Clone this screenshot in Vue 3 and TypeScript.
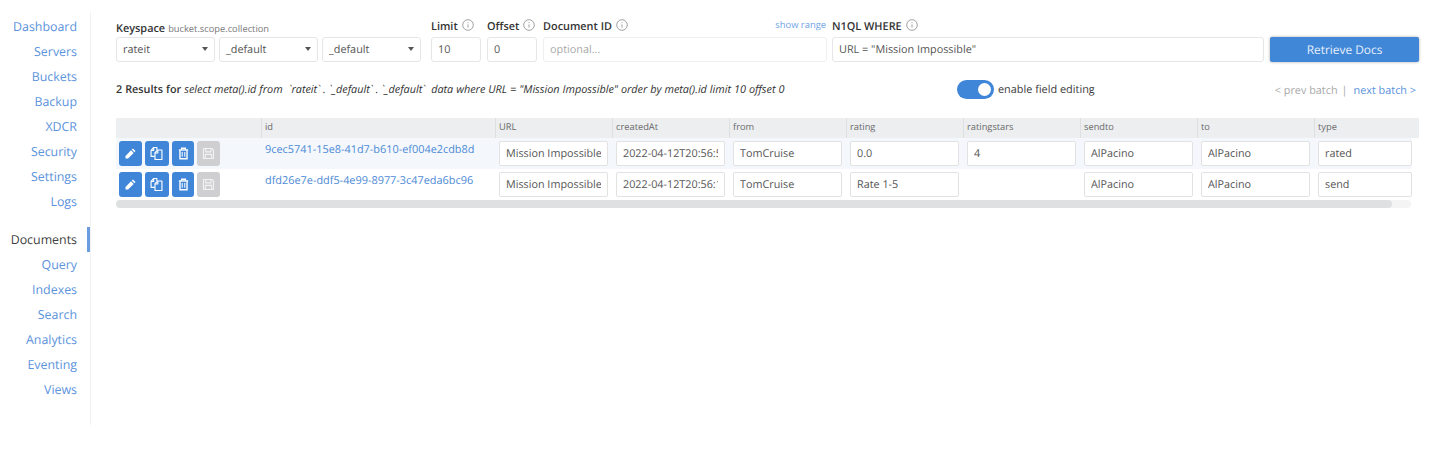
<script setup lang="ts">
const navTop: string[] = ['Dashboard', 'Servers', 'Buckets', 'Backup', 'XDCR', 'Security', 'Settings', 'Logs']
const navBottom: string[] = ['Documents', 'Query', 'Indexes', 'Search', 'Analytics', 'Eventing', 'Views']
const columns: string[] = ['', 'id', 'URL', 'createdAt', 'from', 'rating', 'ratingstars', 'sendto', 'to', 'type']
interface Row { id: string; values: string[] }
const rows: Row[] = [
  { id: '9cec5741-15e8-41d7-b610-ef004e2cdb8d', values: ['Mission Impossible', '2022-04-12T20:56:55', 'TomCruise', '0.0', '4', 'AlPacino', 'AlPacino', 'rated'] },
  { id: 'dfd26e7e-ddf5-4e99-8977-3c47eda6bc96', values: ['Mission Impossible', '2022-04-12T20:56:17', 'TomCruise', 'Rate 1-5', '', 'AlPacino', 'AlPacino', 'send'] },
]
</script>

<template>
  <div class="page">
    <nav class="side">
      <ul class="nav">
        <li v-for="n in navTop" :key="n"><a>{{ n }}</a></li>
      </ul>
      <ul class="nav second">
        <li v-for="n in navBottom" :key="n" :class="{ active: n === 'Documents' }"><a>{{ n }}</a></li>
      </ul>
    </nav>

    <main class="main">
      <section class="controls">
        <div class="field keyspace">
          <label class="lab low">Keyspace <small>bucket.scope.collection</small></label>
          <div class="selects">
            <div class="select">rateit<i class="caret"></i></div>
            <div class="select">_default<i class="caret"></i></div>
            <div class="select">_default<i class="caret"></i></div>
          </div>
        </div>
        <div class="field limit">
          <label class="lab">Limit <svg class="info" viewBox="0 0 12 12"><circle cx="6" cy="6" r="5.3"/><path d="M6 5.4v3.2M6 3.2v1"/></svg></label>
          <div class="input">10</div>
        </div>
        <div class="field offset">
          <label class="lab">Offset <svg class="info" viewBox="0 0 12 12"><circle cx="6" cy="6" r="5.3"/><path d="M6 5.4v3.2M6 3.2v1"/></svg></label>
          <div class="input">0</div>
        </div>
        <div class="field docid">
          <label class="lab spread">
            <span>Document ID <svg class="info" viewBox="0 0 12 12"><circle cx="6" cy="6" r="5.3"/><path d="M6 5.4v3.2M6 3.2v1"/></svg></span>
            <a class="range">show range</a>
          </label>
          <div class="input placeholder">optional...</div>
        </div>
        <div class="field where">
          <label class="lab">N1QL WHERE <svg class="info" viewBox="0 0 12 12"><circle cx="6" cy="6" r="5.3"/><path d="M6 5.4v3.2M6 3.2v1"/></svg></label>
          <div class="input">URL = "Mission Impossible"</div>
        </div>
        <button class="retrieve">Retrieve Docs</button>
      </section>

      <section class="status">
        <div class="summary"><b>2 Results for</b> <em>select meta().id from &nbsp;`rateit`&nbsp;.&nbsp;`_default`&nbsp;.&nbsp;`_default`&nbsp; data where URL = "Mission Impossible" order by meta().id limit 10 offset 0</em></div>
        <div class="toggle-wrap">
          <span class="toggle"><span class="knob"></span></span>
          <span>enable field editing</span>
        </div>
        <div class="batch"><span class="prev">&lt; prev batch</span><span class="sep">|</span><a>next batch &gt;</a></div>
      </section>

      <section class="table">
        <div class="tr head">
          <div v-for="(c, i) in columns" :key="i" class="th" :class="{ ruled: i > 0 }">{{ c }}</div>
        </div>
        <div v-for="(r, ri) in rows" :key="r.id" class="tr body" :class="{ tint: ri === 0 }">
          <div class="actions">
            <button class="ab pen">
              <svg viewBox="0 0 14 14" width="13" height="13"><path fill="#fff" d="M9.6 1.6l2.8 2.8-1.2 1.2-2.8-2.8zM7.6 3.6l2.8 2.8-6 6H1.6V9.6z"/></svg>
            </button>
            <button class="ab copy">
              <svg viewBox="0 0 16 16" width="15" height="15" fill="none" stroke="#fff" stroke-width="1.2" stroke-linejoin="round"><path d="M6 11H2.2V4.6L5 1.6h3.4v2.6"/><path d="M5 1.8v3H2.2"/><path d="M6.4 7.2l3-3h4.4V14.4H6.4z"/><path d="M9.4 4.4v3h-3"/></svg>
            </button>
            <button class="ab trash">
              <svg viewBox="0 0 14 14" width="13" height="13" fill="none" stroke="#fff" stroke-width="1.5"><path d="M2 3.2h10" /><path d="M5 3V1.4h4V3"/><path d="M3.2 3.4v9.2h7.6V3.4"/><path d="M5.6 5.4v5.2M8.4 5.4v5.2" stroke-width="1.1"/></svg>
            </button>
            <button class="ab save">
              <svg viewBox="0 0 14 14" width="13" height="13" fill="none" stroke="#f2f2f2" stroke-width="1.2" stroke-linejoin="round"><path d="M1.6 1.6h9l1.8 1.8v9H1.6z"/><path d="M4 1.8v3.4h5.6V1.8"/><path d="M3.6 12.2V8h6.8v4.2"/></svg>
            </button>
          </div>
          <div class="idcell"><a>{{ r.id }}</a></div>
          <div v-for="(v, vi) in r.values" :key="vi" class="cell">
            <input v-if="v" class="ci" :value="v" readonly />
          </div>
        </div>
        <div class="scroll"><div class="thumb"></div></div>
      </section>
    </main>
  </div>
</template>

<style scoped>
.page {
  display: flex;
  width: 1431px;
  height: 470px;
  padding-top: 12px;
  box-sizing: border-box;
  font-family: "Open Sans", sans-serif;
  color: #3b3b3b;
  background: #fff;
  overflow: hidden;
  text-rendering: geometricPrecision;
}
.side {
  width: 91px;
  height: 413px;
  flex: none;
  box-sizing: border-box;
  border-right: 1px solid #f1f1f1;
  padding-top: 2px;
}
.nav { list-style: none; margin: 0; padding: 0; }
.nav.second { margin-top: 13px; }
.nav li {
  height: 25px;
  line-height: 25px;
  padding-right: 13px;
  text-align: right;
  font-size: 12.4px;
  color: #5b93dc;
  box-sizing: border-box;
}
.nav li.active { color: #3f3f3f; border-right: 3px solid #6a9ce0; padding-right: 10px; }
.main { width: 1303px; margin-left: 25px; flex: none; }
.controls { display: flex; align-items: flex-end; height: 50px; }
.field { display: flex; flex-direction: column; }
.lab {
  display: flex;
  align-items: center;
  gap: 4px;
  height: 24px;
  padding-top: 2px;
  box-sizing: border-box;
  font-size: 10.9px;
  font-weight: 600;
  color: #333;
  white-space: nowrap;
}
.lab.low { padding-top: 6px; gap: 3px; }
.lab.spread { justify-content: space-between; }
.lab.spread > span { display: flex; align-items: center; gap: 4px; }
.lab small { font-size: 9.3px; font-weight: 400; color: #777; }
.info { width: 12px; height: 12px; flex: none; fill: none; stroke: #8a8a8a; stroke-width: 0.8; margin-top: -3px; }
.selects { display: flex; gap: 4px; }
.select {
  position: relative;
  width: 99px;
  height: 25px;
  line-height: 23px;
  box-sizing: border-box;
  padding-left: 6px;
  border: 1px solid #e6e6e6;
  border-radius: 3px;
  font-size: 10.85px;
  color: #555;
}
.caret {
  position: absolute;
  right: 6px;
  top: 9px;
  width: 0;
  height: 0;
  border-left: 3.5px solid transparent;
  border-right: 3.5px solid transparent;
  border-top: 4px solid #555;
}
.keyspace { margin-right: 10px; }
.limit { width: 50px; margin-right: 6px; }
.offset { width: 50px; margin-right: 6px; }
.docid { width: 284px; margin-right: 5px; }
.where { width: 432px; margin-right: 6px; }
.range { font-size: 9.4px; font-weight: 400; color: #6fa3e6; padding-right: 1px; margin-top: -4px; }
.input {
  height: 25px;
  line-height: 23px;
  box-sizing: border-box;
  padding-left: 6px;
  border: 1px solid #e6e6e6;
  border-radius: 3px;
  font-size: 10.85px;
  color: #555;
}
.input.placeholder { color: #aaa; border-color: #efefef; }
.retrieve {
  width: 149px;
  height: 25px;
  border: 0;
  border-radius: 2px;
  background: #4087d8;
  color: #e8f0fa;
  font-family: inherit;
  font-size: 11.9px;
  text-rendering: geometricPrecision;
  box-shadow: 0 0 3px rgba(0, 0, 0, 0.35);
}
.status {
  position: relative;
  display: flex;
  align-items: center;
  height: 20px;
  margin-top: 17px;
  font-size: 10.85px;
  white-space: nowrap;
}
.summary { width: 841px; color: #333; word-spacing: 0.15px; }
.summary b { font-weight: 600; }
.toggle-wrap { display: flex; align-items: center; gap: 4px; font-size: 10.9px; color: #3b3b3b; }
.toggle {
  position: relative;
  display: block;
  width: 37px;
  height: 19px;
  border-radius: 10px;
  background: #3f86d8;
}
.knob {
  position: absolute;
  right: 3px;
  top: 3px;
  width: 13px;
  height: 13px;
  border-radius: 50%;
  background: #fff;
}
.batch {
  margin-left: auto;
  padding-right: 3px;
  padding-top: 2px;
  font-size: 10.85px;
  color: #5b93dc;
  display: flex;
  align-items: center;
}
.prev { color: #a9a9a9; }
.sep { color: #a9a9a9; margin: 0 6px 0 4px; }
.table { margin-top: 19px; width: 1303px; }
.tr {
  display: grid;
  grid-template-columns: 145px 234px repeat(7, 117px) 105px;
}
.head { height: 20px; background: #eceef0; }
.th {
  font-size: 9.3px;
  line-height: 18px;
  color: #6a6a6a;
  padding-left: 3px;
  box-sizing: border-box;
}
.th.ruled { border-left: 1px solid #dedfe1; }
.body { height: 31px; width: 1296px; grid-template-columns: 145px 234px repeat(7, 117px) 98px; }
.tint { background: #f4f8fc; }
.actions { display: flex; align-items: center; padding-left: 2.5px; gap: 3px; }
.ab {
  display: flex;
  align-items: center;
  justify-content: center;
  width: 23px;
  height: 25px;
  padding: 0;
  border: 0;
  border-radius: 3px;
  background: #3f86d8;
}
.ab.copy { width: 24.5px; }
.ab.trash { width: 22px; }
.ab.save { background: #cfcfd1; }
.idcell { padding: 3px 0 0 4px; font-size: 10.9px; line-height: 18px; color: #4d8ad6; white-space: nowrap; }
.cell { padding: 3px 0 0 4px; }
.ci {
  display: block;
  width: 109px;
  height: 25px;
  box-sizing: border-box;
  padding: 0 6px;
  border: 1px solid #e2e2e2;
  border-radius: 2px;
  background: #fff;
  font-family: inherit;
  font-size: 10.8px;
  text-rendering: geometricPrecision;
  color: #555;
  outline: none;
}
.cell:last-child .ci { width: 94px; }
.scroll { width: 1295px; height: 8px; border-radius: 4px; background: #f4f4f5; }
.thumb { width: 1276px; height: 8px; border-radius: 4px; background: #dfe0e1; }
</style>
